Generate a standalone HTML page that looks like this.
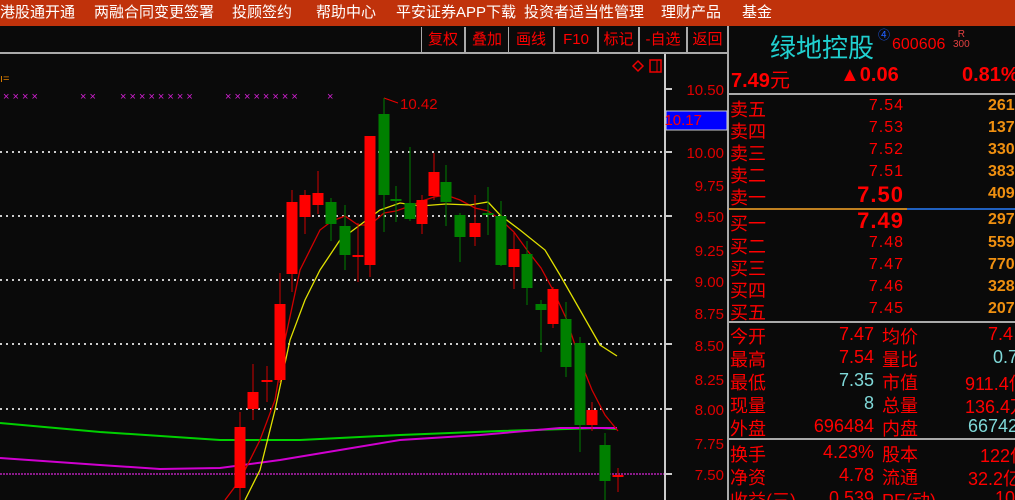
<!DOCTYPE html><html><head><meta charset="utf-8"><style>
html,body{margin:0;width:1015px;height:500px;overflow:hidden}
body{background:#0a0a0a;font-family:"Liberation Sans","Noto Sans CJK SC",sans-serif;position:relative}
.top{position:absolute;left:0;top:0;width:1015px;height:26px;background:#c0320b;color:#fff;font-size:15px;line-height:26px;white-space:nowrap}
.top span{position:absolute;top:0}
.tb{position:absolute;top:27px;height:25px;border:1px solid #aaa;border-top:none;color:#f00;font-size:15px;line-height:25px;text-align:center}
.q{position:absolute;font-size:16px;white-space:nowrap}
.r{color:#f00}.o{color:#f09010}.c{color:#7fd8d8}
</style></head><body>
<div class="top"><span style="left:0">港股通开通</span><span style="left:94px">两融合同变更签署</span><span style="left:232px">投顾签约</span><span style="left:316px">帮助中心</span><span style="left:396px">平安证券APP下载</span><span style="left:524px">投资者适当性管理</span><span style="left:661px">理财产品</span><span style="left:742px">基金</span></div>
<div style="position:absolute;left:0;top:52px;width:728px;height:2px;background:#aaa"></div>
<div class="tb" style="left:421px;width:42px">复权</div>
<div class="tb" style="left:465px;width:42px">叠加</div>
<div class="tb" style="left:508px;width:44px">画线</div>
<div class="tb" style="left:554px;width:42px">F10</div>
<div class="tb" style="left:598px;width:39px">标记</div>
<div class="tb" style="left:639px;width:46px">-自选</div>
<div class="tb" style="left:687px;width:39px">返回</div>
<div style="position:absolute;left:727px;top:26px;width:2px;height:474px;background:#aaa"></div>
<svg style="position:absolute;left:0;top:0" width="728" height="500">
<line x1="665" y1="54" x2="665" y2="500" stroke="#ccc" stroke-width="2"/>
<g stroke="#ccc" stroke-width="2" stroke-dasharray="2,4">
<line x1="0" y1="152" x2="664" y2="152"/><line x1="0" y1="216" x2="664" y2="216"/><line x1="0" y1="280" x2="664" y2="280"/><line x1="0" y1="344" x2="664" y2="344"/><line x1="0" y1="409" x2="664" y2="409"/></g>
<line x1="0" y1="474" x2="664" y2="474" stroke="#8a1a8a" stroke-width="2" stroke-dasharray="2,1"/>
<rect x="666" y="111" width="61" height="19" fill="#0000ff" stroke="#ccc"/>
<g fill="#e00000" font-size="15" text-anchor="end" font-family="Liberation Sans">
<text x="724" y="95">10.50</text><text x="702" y="125" fill="#f00">10.17</text><text x="724" y="158">10.00</text><text x="724" y="191">9.75</text><text x="724" y="222">9.50</text><text x="724" y="256">9.25</text><text x="724" y="287">9.00</text><text x="724" y="319">8.75</text><text x="724" y="351">8.50</text><text x="724" y="385">8.25</text><text x="724" y="415">8.00</text><text x="724" y="449">7.75</text><text x="724" y="480">7.50</text>
<text x="400" y="109" text-anchor="start">10.42</text></g>
<path d="M384 98 L398 103" stroke="#e00" fill="none"/>
<g stroke="#ccc" stroke-width="2"><line x1="665" y1="89" x2="672" y2="89"/><line x1="665" y1="152" x2="672" y2="152"/><line x1="665" y1="216" x2="672" y2="216"/><line x1="665" y1="280" x2="672" y2="280"/><line x1="665" y1="344" x2="672" y2="344"/><line x1="665" y1="409" x2="672" y2="409"/><line x1="665" y1="474" x2="672" y2="474"/></g>
<path d="M633 66 L638 61 L643 66 L638 71Z" fill="none" stroke="#e00" stroke-width="1.5"/>
<rect x="650" y="60" width="11" height="12" fill="none" stroke="#e00" stroke-width="1.5"/><line x1="657" y1="60" x2="657" y2="72" stroke="#e00"/>
<text x="0" y="82" fill="#e08000" font-size="11">ı=</text>
<g fill="#d020d0" font-size="11" font-family="Liberation Sans"><text x="3" y="100">× × × ×</text><text x="80" y="100">× ×</text><text x="120" y="100">× × × × × × × ×</text><text x="225" y="100">× × × × × × × ×</text><text x="327" y="100">×</text></g>
<polyline fill="none" stroke="#00d000" stroke-width="2" points="0,423 100,432 220,440 300,440 400,435 500,431 600,428 617,429"/>
<polyline fill="none" stroke="#d000d0" stroke-width="2" points="0,458 100,465 160,469 220,468 280,460 340,450 400,440 480,435 560,428 617,428"/>
<polyline fill="none" stroke="#d00000" stroke-width="1.3" points="225,500 240,480 260,440 275,400 285,340 300,270 320,230 332,221 345,216 358,225 370,225 384,213 396,211 410,206 422,201 434,197 446,195 460,200 475,208 488,211 501,220 514,232 527,250 541,268 553,290 566,318 580,360 592,390 605,415 618,431"/>
<polyline fill="none" stroke="#e0e000" stroke-width="1.3" points="245,500 260,470 275,410 290,340 305,300 320,270 340,240 360,225 380,210 400,203 420,206 446,204 470,205 488,202 500,215 520,230 545,250 560,275 580,310 600,345 617,356"/>
<g id="c"></g>
</svg>
<script>
var d=[[240,427,488,412,500,'r'],[253,392,409,364,420,'r'],[267,380,381,366,402,'r'],[280,304,380,273,383,'r'],[292,202,274,190,292,'r'],[305,195,217,190,234,'r'],[318,193,205,171,214,'r'],[331,202,224,198,241,'g'],[345,226,255,205,270,'g'],[358,255,256,223,282,'r'],[370,136,265,136,277,'r'],[384,114,195,98,232,'g'],[396,199,200,186,222,'g'],[410,203,219,147,221,'g'],[422,200,224,195,234,'r'],[434,172,196,153,200,'r'],[446,182,202,165,226,'g'],[460,215,237,213,262,'g'],[475,223,237,195,246,'r'],[488,213,214,187,235,'g'],[501,216,265,201,266,'g'],[514,249,267,232,289,'r'],[527,254,288,241,305,'g'],[541,304,310,300,352,'g'],[553,289,324,287,328,'r'],[566,319,367,302,377,'g'],[580,343,425,337,452,'g'],[592,410,425,402,431,'r'],[605,445,481,433,500,'g'],[618,475,476,468,492,'r']];
var s='';d.forEach(function(a){var col=a[5]=='r'?'#ff0000':'#008000';var wc=a[5]=='r'?'#d00000':'#008000';s+='<line x1="'+a[0]+'" y1="'+a[3]+'" x2="'+a[0]+'" y2="'+a[4]+'" stroke="'+wc+'"/>';var h=Math.max(a[2]-a[1],2);s+='<rect x="'+(a[0]-5.5)+'" y="'+a[1]+'" width="11" height="'+h+'" fill="'+col+'"/>';});
document.getElementById('c').innerHTML=s;
</script>
<div class="q" style="left:770px;top:28px;color:#20d0d0;font-size:26px">绿地控股</div>
<div class="q" style="left:878px;top:26px;color:#2060ff;font-size:12px">④</div>
<div class="q r" style="left:892px;top:36px;font-size:16px">600606</div>
<div class="q" style="left:953px;top:30px;color:#e04040;font-size:10px;line-height:10px;text-align:center">R<br>300</div>
<div class="q r" style="left:731px;top:64px;font-size:20px;font-weight:bold">7.49<span style="font-weight:normal">元</span></div>
<div class="q r" style="left:840px;top:64px;font-size:20px;font-weight:bold">▲0.06</div>
<div class="q r" style="left:962px;top:64px;font-size:20px;font-weight:bold">0.81%</div>
<div style="position:absolute;left:729px;top:93px;width:286px;height:2px;background:#aaa"></div>
<div style="position:absolute;left:729px;top:208px;width:178px;height:2px;background:#c08020"></div>
<div style="position:absolute;left:907px;top:208px;width:108px;height:2px;background:#2060c0"></div>
<div style="position:absolute;left:729px;top:321px;width:286px;height:2px;background:#aaa"></div>
<div style="position:absolute;left:729px;top:438px;width:286px;height:2px;background:#aaa"></div>
<div id="ob"></div>
<script>
var rows=[['卖五','7.54','261',96],['卖四','7.53','137',118],['卖三','7.52','330',140],['卖二','7.51','383',162],['卖一','7.50','409',184],['买一','7.49','297',210],['买二','7.48','559',233],['买三','7.47','770',255],['买四','7.46','328',277],['买五','7.45','207',299]];
var h='';rows.forEach(function(r){var big=(r[0]=='卖一'||r[0]=='买一');h+='<div class="q r" style="left:730px;top:'+r[3]+'px;font-size:18px">'+r[0]+'</div><div class="q r" style="right:'+(1015-904)+'px;top:'+(r[3]+(big?-2:1))+'px;font-size:'+(big?22:16)+'px;'+(big?'font-weight:bold':'')+';letter-spacing:1px">'+r[1]+'</div><div class="q o" style="left:988px;top:'+(r[3]+1)+'px;font-weight:bold">'+r[2]+'</div>';});
var st=[['今开','7.47','r','均价','7.4','r',323,988],['最高','7.54','r','量比','0.7','c',346,993],['最低','7.35','c','市值','911.4亿','r',369,965],['现量','8','c','总量','136.4万','r',392,965],['外盘','696484','r','内盘','66742','c',415,968],['换手','4.23%','r','股本','122亿','r',441,980],['净资','4.78','r','流通','32.2亿','r',464,968],['收益(三)','0.539','r','PE(动)','10','r',487,995]];
st.forEach(function(r){h+='<div class="q r" style="left:730px;top:'+r[6]+'px;font-size:18px">'+r[0]+'</div><div class="q '+r[2]+'" style="right:'+(1015-874)+'px;top:'+(r[6]+1)+'px;font-size:18px">'+r[1]+'</div><div class="q r" style="left:882px;top:'+r[6]+'px;font-size:18px">'+r[3]+'</div><div class="q '+r[5]+'" style="left:'+r[7]+'px;top:'+(r[6]+1)+'px;font-size:18px">'+r[4]+'</div>';});
document.getElementById('ob').innerHTML=h;
</script>
</body></html>
